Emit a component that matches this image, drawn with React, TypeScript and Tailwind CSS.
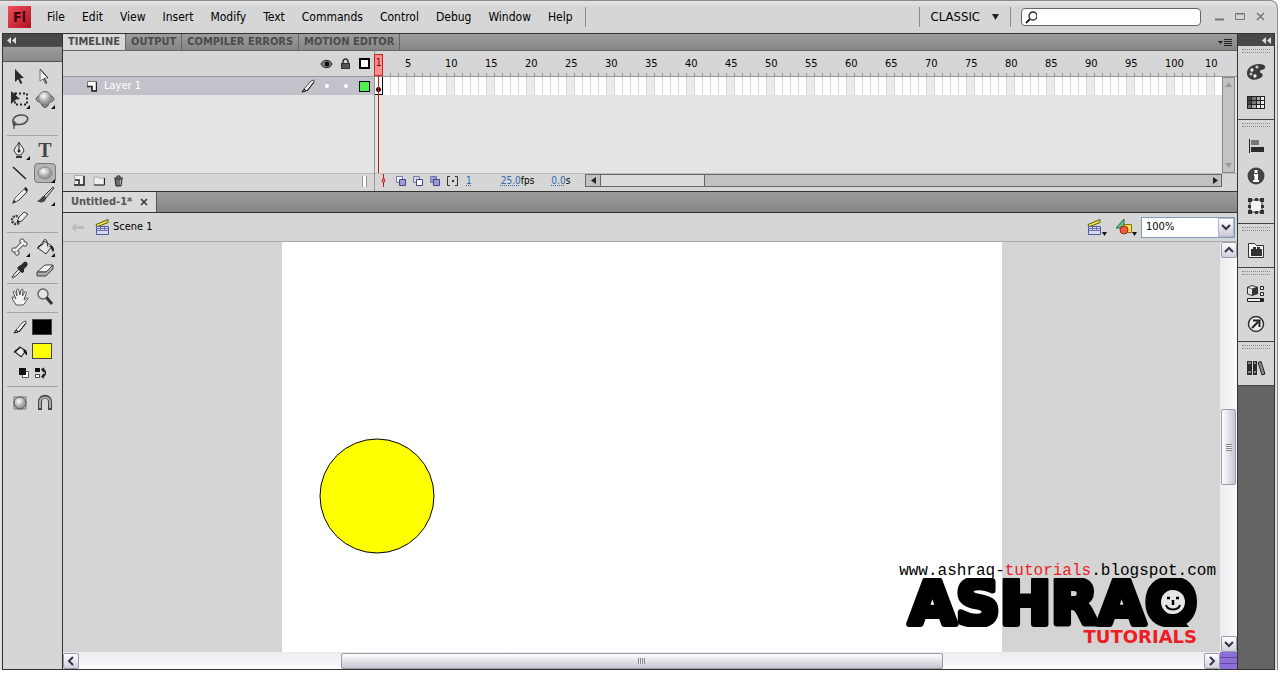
import type { ReactNode } from "react";

const menus = ["File", "Edit", "View", "Insert", "Modify", "Text", "Commands", "Control", "Debug", "Window", "Help"];
const panelTabs = ["TIMELINE", "OUTPUT", "COMPILER ERRORS", "MOTION EDITOR"];
const frames = Array.from({ length: 110 }, (_, i) => i + 1);
const rulerLabels = Array.from({ length: 21 }, (_, i) => (i + 1) * 5);

function Svg({ size = 20, children }: { size?: number; children: ReactNode }) {
  return (
    <svg width={size} height={size} viewBox={`0 0 ${size} ${size}`} fill="none" aria-hidden="true">
      {children}
    </svg>
  );
}

// little triangle that marks a tool with a fly-out
const Corner = () => <path d="M20 16v4h-4z" fill="#111" />;

const icons = {
  selection: (
    <Svg>
      <path d="M5 3l9 9-4 .3 2.4 4.7-2 1-2.2-4.8L5 16z" fill="#2b2b2b" />
    </Svg>
  ),
  subselection: (
    <Svg>
      <path d="M5 3l8 9-3.4.3 2.3 4.5-1.6.8-2.2-4.6L5 15z" fill="#f4f4f4" stroke="#777" />
      <path d="M9 12l2.5 5.5M5 3l8 9" stroke="#222" />
    </Svg>
  ),
  freeTransform: (
    <Svg>
      <path d="M5 4.500h12v11H5z" stroke="#222" strokeWidth="2" strokeDasharray="2 2" />
      <path d="M1 2l9 8-4 .5L1 15z" fill="#2b2b2b" />
      <Corner />
    </Svg>
  ),
  rotate3d: (
    <Svg>
      <ellipse cx="10" cy="10" rx="9" ry="4" fill="#aaa" stroke="#555" />
      <ellipse cx="10" cy="10.500" rx="4.500" ry="8" fill="#888" stroke="#555" />
      <circle cx="10" cy="9" r="6.500" fill="url(#ball)" stroke="#777" />
      <Corner />
    </Svg>
  ),
  lasso: (
    <Svg>
      <path d="M5 12C1 10 3 4 10 3c7-.6 9 3 7 6-2 3-8 4.500-12 3z" stroke="#4a4a4a" strokeWidth="1.500" />
      <path d="M5 9c-3 1-2 4 0 4s1-3-1-2c-2 2 1 3 0 6" stroke="#4a4a4a" strokeWidth="1.300" />
    </Svg>
  ),
  pen: (
    <Svg>
      <path d="M9 2c1 3 5 6 5 9l-3 4H7l-3-4c0-3 4-6 5-9z" fill="#e6e6e6" stroke="#333" />
      <path d="M9 3v7" stroke="#222" />
      <circle cx="9" cy="11" r="1.500" fill="#222" />
      <path d="M6 16h6v2H6z" fill="#333" />
      <Corner />
    </Svg>
  ),
  text: (
    <Svg>
      <text x="10" y="17" textAnchor="middle" fontSize="20" fontFamily="Liberation Serif" fontWeight="bold" fill="#444">T</text>
    </Svg>
  ),
  line: (
    <Svg>
      <path d="M3 4l13 12" stroke="#222" strokeWidth="1.500" />
    </Svg>
  ),
  oval: (
    <Svg>
      <ellipse cx="10" cy="10" rx="7" ry="6" fill="url(#ball)" stroke="#888" />
      <Corner />
    </Svg>
  ),
  pencil: (
    <Svg>
      <path d="M3 16l2-4 9-9 3 3-9 9z" fill="#e9e9e9" stroke="#666" />
      <path d="M2 18l2-4 2 2zM14 2l2-1 2 3-1 2z" fill="#222" />
      <path d="M8 15l9-9" stroke="#333" />
    </Svg>
  ),
  brush: (
    <Svg>
      <path d="M18 1l-9 9 2 2 8-10z" fill="#ccc" stroke="#333" />
      <path d="M9 10c-3 0-3 4-7 5 4 3 9 1 9-3z" fill="#444" />
      <Corner />
    </Svg>
  ),
  deco: (
    <Svg>
      <circle cx="6" cy="11" r="4" stroke="#444" strokeWidth="2.500" strokeDasharray="2 1" />
      <path d="M7 13l2-5 5-5 4 2-6 7z" fill="#e9e9e9" stroke="#444" />
      <path d="M7 14l1-3 2 2z" fill="#111" />
    </Svg>
  ),
  bone: (
    <Svg>
      <path d="M5 14L13 6" stroke="#444" strokeWidth="4.500" />
      <circle cx="4" cy="13" r="2.200" fill="#eee" stroke="#444" />
      <circle cx="7" cy="16" r="2.200" fill="#eee" stroke="#444" />
      <circle cx="12" cy="4" r="2.200" fill="#eee" stroke="#444" />
      <circle cx="15" cy="7" r="2.200" fill="#eee" stroke="#444" />
      <path d="M5 14L14 5" stroke="#eee" strokeWidth="2.500" />
      <Corner />
    </Svg>
  ),
  bucket: (
    <Svg>
      <path d="M9 4l8 5-6 8-8-6z" fill="#e8e8e8" stroke="#333" />
      <path d="M2 12c0-3 4-5 8-6-4 3-6 4-8 6zM17 9c3 2 2 5 1 6-2-2-1-4-4-6z" fill="#222" />
      <path d="M8 6c0-5 4-4 4-1l1 5" stroke="#333" />
      <Corner />
    </Svg>
  ),
  eyedropper: (
    <Svg>
      <path d="M2 18l2-4 6-6 2 2-6 6z" fill="#ddd" stroke="#444" />
      <path d="M9 6l2-1 3-3c2-1 5 1 3 4l-3 3v3l-2 1-5-5z" fill="#2b2b2b" />
    </Svg>
  ),
  eraser: (
    <Svg>
      <path d="M2 12l8-7h8l-7 7z" fill="#f2f2f2" stroke="#444" />
      <path d="M2 12h9l7-7v4l-7 7H2z" fill="#aaa" stroke="#444" />
    </Svg>
  ),
  hand: (
    <Svg>
      <path
        d="M6 18c-1-3-4-5-4-8 2-1 3 2 4 2L3 5c1-2 2 0 3 1l1 3-.5-6c1-2 2-1 2.200 0L10 8l1-5c1-1 2-1 2 0l-.5 6 2-4c2-1 2 1 1.500 2L14 13l3-2c2 0 1 1 0 2-2 2-2 4-4 5z"
        fill="#f1f1f1"
        stroke="#555"
      />
    </Svg>
  ),
  magnifier: (
    <Svg>
      <circle cx="8" cy="7" r="5" fill="#e5e5e5" stroke="#666" strokeWidth="1.500" />
      <path d="M11.500 10.500L17 17" stroke="#333" strokeWidth="3" />
    </Svg>
  ),
  snap: (
    <Svg>
      <path d="M5 17V9c0-7 10-7 10 0v8" stroke="#444" strokeWidth="4" />
      <path d="M5 15V9c0-6 10-6 10 0v6" stroke="#aaa" strokeWidth="2" />
    </Svg>
  ),
  objectDrawing: (
    <Svg>
      <path d="M4 4h12v12H4z" stroke="#777" />
      <circle cx="10" cy="10" r="6" fill="url(#ball)" stroke="#555" />
    </Svg>
  ),
  palette: (
    <Svg>
      <path d="M18 3C11 0 1 4 1 11c0 6 6 8 11 6 5-1 6-5 3-6-2-1-1-2 0-3 3 0 6-2 3-5z" fill="#3a3a3a" />
      <circle cx="6" cy="8" r="1.700" fill="#eee" />
      <circle cx="5" cy="12" r="1.600" fill="#bbb" />
      <circle cx="9" cy="14" r="1.700" fill="#eee" />
      <circle cx="11" cy="5" r="1.600" fill="#ccc" />
    </Svg>
  ),
  swatches: (
    <Svg>
      <path d="M1 4h18v13H1z" fill="#222" />
      <path d="M2 5h3v3H2zM2 9h3v3H2z" fill="#444" />
      <path d="M6 5h4v3H6zM6 9h4v3H6zM2 13h3v3H2z" fill="#777" />
      <path d="M11 5h3v3h-3zM11 9h3v3h-3zM6 13h4v3H6z" fill="#aaa" />
      <path d="M15 5h3v3h-3zM15 9h3v3h-3zM11 13h3v3h-3zM15 13h3v3h-3z" fill="#eee" />
    </Svg>
  ),
  align: (
    <Svg>
      <path d="M3.500 3v14" stroke="#222" />
      <path d="M5 4h8v5H5z" fill="#777" />
      <path d="M5 11h13v5H5z" fill="#2b2b2b" />
    </Svg>
  ),
  info: (
    <Svg>
      <circle cx="10" cy="10" r="8.500" fill="#444" />
      <path d="M8 8h4v6h1v2H7v-2h1.500v-4H8zM8.500 4h3v3h-3z" fill="#fff" />
    </Svg>
  ),
  transform: (
    <Svg>
      <path d="M4 4h12v12H4z" fill="#f4f4f4" stroke="#333" />
      <path d="M2 2h4v4H2zM14 2h4v4h-4zM2 14h4v4H2zM14 14h4v4h-4zM9 2h3v3H9zM9 15h3v3H9zM2 9h3v3H2zM15 9h3v3h-3z" fill="#333" />
    </Svg>
  ),
  library: (
    <Svg>
      <path d="M2.500 3.500h6l2 2h7v12h-15z" fill="#f5f5f5" stroke="#333" />
      <path d="M5 9h2V7h3v2h1V7h3v2h2v7H5z" fill="#333" />
    </Svg>
  ),
  components: (
    <Svg>
      <path d="M6 1l6 2v7l-6 2-5-2V3z" fill="#333" />
      <path d="M2 4l4 1v6L2 9.500zM6 2l4 1.200L6 4.500 2.500 3.200z" fill="#e5e5e5" />
      <path d="M14.500 2.500h3v3h-3zM14.500 8.500h3v3h-3zM1.500 14.500h16v3h-16z" fill="#eee" stroke="#222" />
      <path d="M14 14h3v3h-3z" fill="#222" />
    </Svg>
  ),
  inspector: (
    <Svg>
      <circle cx="10" cy="10" r="7.500" fill="#eee" stroke="#333" strokeWidth="1.500" />
      <path d="M6 14l6-6M7 6.500h6.500V13" stroke="#222" strokeWidth="2" />
    </Svg>
  ),
  books: (
    <Svg>
      <path d="M1 3h5v14H1zM7 3h4v14H7z" fill="#2b2b2b" />
      <path d="M2 5h3M8 5h2M2 14h3M8 14h2" stroke="#ddd" />
      <path d="M12 4.500l3-1 4 12.500-3 1z" fill="#888" stroke="#222" />
    </Svg>
  ),
};

type IconName = keyof typeof icons;

const toolGroups: { name: string; rows: (readonly [IconName, IconName?])[] }[] = [
  { name: "select", rows: [["selection", "subselection"], ["freeTransform", "rotate3d"], ["lasso"]] },
  { name: "draw", rows: [["pen", "text"], ["line", "oval"], ["pencil", "brush"], ["deco"]] },
  { name: "paint", rows: [["bone", "bucket"], ["eyedropper", "eraser"]] },
];

const dockGroups: IconName[][] = [
  ["palette", "swatches"],
  ["align", "info", "transform"],
  ["library"],
  ["components", "inspector"],
  ["books"],
];

function ToolButton({ name }: { name: IconName }) {
  return (
    <button
      aria-label={name}
      className={
        name === "oval"
          ? "flex h-5 w-[22px] items-center justify-center rounded-sm border border-[#777] bg-[#b4b4b4]"
          : "flex h-5 w-[22px] items-center justify-center"
      }
    >
      {icons[name]}
    </button>
  );
}

function ToolRow({ children }: { children: ReactNode }) {
  return <div className="grid h-[23px] grid-cols-2 place-items-center">{children}</div>;
}

function Toolbar() {
  return (
    <aside className="flex w-[61px] shrink-0 flex-col border-x border-[#333] bg-[#d6d6d6]">
      <button aria-label="Collapse tools" className="flex h-3 items-center bg-[#484848] pl-1">
        <Rewind />
      </button>
      <div className="h-4 border-y border-[#555] bg-linear-to-b from-[#9c9c9c] to-[#8a8a8a]" />
      {toolGroups.map((group) => (
        <div key={group.name} className="mx-1 border-b border-[#a3a3a3] py-[2px]">
          {group.rows.map(([a, b]) => (
            <ToolRow key={a}>
              <ToolButton name={a} />
              {b && <ToolButton name={b} />}
            </ToolRow>
          ))}
        </div>
      ))}
      <div className="mx-1 border-b border-[#a3a3a3] pb-1 pt-px">
        <ToolRow>
          <ToolButton name="hand" />
          <ToolButton name="magnifier" />
        </ToolRow>
      </div>
      <div className="mx-1 border-b border-[#a3a3a3] pb-[3px] pt-[2px]">
        <div className="flex h-6 items-center justify-between px-[6px]">
          <PencilMark />
          <button aria-label="Stroke color" className="h-4 w-5 border border-[#444] bg-black" />
        </div>
        <div className="flex h-6 items-center justify-between px-[6px]">
          <svg width="15" height="15" viewBox="0 0 20 20" aria-hidden="true">
            <path d="M9 4l8 5-6 8-8-6z" fill="#eee" stroke="#222" strokeWidth="1.500" />
            <path d="M1 12c0-3 4-6 9-7-4 4-7 5-9 7zM16 8c4 3 3 6 2 7-2-2-2-4-5-6z" fill="#111" />
          </svg>
          <button aria-label="Fill color" className="h-4 w-5 border border-[#444] bg-[#ffff00]" />
        </div>
        <div className="flex h-5 items-center justify-center gap-1">
          <svg width="12" height="12" aria-hidden="true">
            <path d="M4.500 4.500h6v6h-6z" fill="#fff" stroke="#555" />
            <path d="M1 1h7v7H1z" fill="#111" />
          </svg>
          <svg width="14" height="12" fill="none" aria-hidden="true">
            <path d="M1 1h5v4H1z" fill="#111" />
            <path d="M1.500 7.500h4v3h-4z" fill="#fff" stroke="#444" />
            <path d="M8 2.500c4-1 5 6 0 7M10 1L8 2.500 10 5M10 7L8 9.500l2 1.500" stroke="#222" strokeWidth="1.500" />
          </svg>
        </div>
      </div>
      <div className="px-1 pt-1">
        <ToolRow>
          <ToolButton name="objectDrawing" />
          <ToolButton name="snap" />
        </ToolRow>
      </div>
    </aside>
  );
}

function Rewind() {
  return (
    <svg width="9" height="7" aria-hidden="true">
      <path d="M4 0v7L0 3.500zM9 0v7L5 3.500z" fill="#ddd" />
    </svg>
  );
}

function PencilMark() {
  return (
    <svg width="14" height="14" fill="none" aria-hidden="true">
      <path d="M3 10l7-8 3-1v2l-7 9z" fill="#eee" stroke="#555" />
      <path d="M1 13l2-3 2 2zM6 12l7-9" stroke="#111" />
    </svg>
  );
}

function Clapper() {
  return (
    <svg width="15" height="17" aria-hidden="true">
      <path d="M1 5.500L13 .5v3L2 8z" fill="#e8e040" stroke="#5b5b10" />
      <path d="M1.500 7.500h12v8h-12z" fill="#d5d8f5" stroke="#55589a" />
      <path d="M2 9.500h11M2 11.500h11M5.500 8v4M9.500 8v4" stroke="#6b6fae" />
    </svg>
  );
}

function MenuBar() {
  return (
    <header className="flex h-[33px] shrink-0 items-center rounded-tr-lg border-r border-t border-[#8b8b8b] bg-linear-to-b from-[#e4e4e4] via-[#d6d6d6] via-20% to-[#d6d6d6] pl-2 pr-3">
      <div className="mr-4 flex h-[22px] w-[23px] items-center justify-center bg-linear-to-br from-[#f34a5c] to-[#b30d20] text-sm font-bold text-[#3a0208]">Fl</div>
      <nav className="flex gap-[17px]">
        {menus.map((menu) => (
          <button key={menu}>{menu}</button>
        ))}
      </nav>
      <div className="ml-3 h-5 w-px bg-[#8a8a8a]" />
      <div className="ml-auto flex items-center">
        <div className="h-5 w-px bg-[#8a8a8a]" />
        <button className="flex items-center gap-3 px-[11px] text-[13px]">
          CLASSIC
          <svg width="7" height="6" aria-hidden="true">
            <path d="M0 0h7L3.500 6z" fill="#222" />
          </svg>
        </button>
        <div className="h-5 w-px bg-[#8a8a8a]" />
        <label className="ml-[10px] flex h-[18px] w-[180px] items-center rounded-sm border border-[#666] bg-white px-[3px]">
          <svg width="13" height="13" fill="none" aria-hidden="true">
            <circle cx="8" cy="5" r="4" stroke="#222" strokeWidth="1.300" />
            <path d="M5 8l-4 4" stroke="#222" strokeWidth="2" />
          </svg>
          <input aria-label="Search" className="w-full min-w-0 outline-none" />
        </label>
        <div className="ml-[14px] flex items-center gap-[11px]">
          <button aria-label="Minimize">
            <svg width="9" height="10"><path d="M0 7.500h9" stroke="#777" strokeWidth="2" /></svg>
          </button>
          <button aria-label="Maximize">
            <svg width="10" height="10" fill="none"><path d="M.5 1.500h9v6h-9zM0 2h10" stroke="#777" /></svg>
          </button>
          <button aria-label="Close">
            <svg width="9" height="10"><path d="M1 1l7 7M8 1L1 8" stroke="#777" strokeWidth="1.500" /></svg>
          </button>
        </div>
      </div>
    </header>
  );
}

function LayerColumn() {
  return (
    <div className="flex w-[312px] shrink-0 flex-col border-r border-[#8d9a98]">
      <div className="flex h-[26px] items-center justify-end border-b border-[#999] bg-[#d6d6d6]">
        <div className="flex w-[19px] justify-center">
          <svg width="13" height="10" aria-hidden="true">
            <path d="M1 5c2-5 9-5 11 0-2 5-9 5-11 0z" fill="#888" stroke="#222" />
            <circle cx="7" cy="5" r="2.500" fill="#111" />
          </svg>
        </div>
        <div className="flex w-[19px] justify-center">
          <svg width="11" height="12" fill="none" aria-hidden="true">
            <path d="M3 6V4c0-4 5-4 5 0v2" stroke="#333" strokeWidth="1.500" />
            <path d="M1 5h9v6H1z" fill="#333" />
            <path d="M2 7h7M2 9h7" stroke="#777" />
          </svg>
        </div>
        <div className="flex w-[19px] justify-center">
          <div className="size-[11px] border-2 border-black bg-white" />
        </div>
      </div>
      <div className="flex h-[18px] items-center bg-[#c2c2ca] pl-6 text-[11px] text-white">
        <svg width="10" height="11" aria-hidden="true">
          <path d="M.5.5h9v9h-4v-4h-5z" fill="#fff" stroke="#777" />
          <path d="M0 5.500h5V10h4.500V1" fill="none" stroke="#222" strokeWidth="1.500" />
        </svg>
        <span className="ml-[7px] flex-1">Layer 1</span>
        <div className="flex w-[19px] justify-center"><PencilMark /></div>
        <div className="flex w-[19px] justify-center"><i className="size-1 rounded-full bg-white" /></div>
        <div className="flex w-[19px] justify-center"><i className="size-1 rounded-full bg-white" /></div>
        <div className="flex w-[19px] justify-center">
          <div className="size-[11px] border border-black bg-[#4ff04f]" />
        </div>
      </div>
      <div className="flex-1" />
      <div className="flex h-[18px] items-start gap-2 border-t border-[#bbb] bg-[#d6d6d6] pl-[11px] pr-[7px] pt-px">
        <button aria-label="New layer">
          <svg width="11" height="11"><path d="M.5.5h9v9h-9z" fill="#eee" stroke="#aaa" /><path d="M0 10h10V1M1 5h4v4" fill="none" stroke="#222" strokeWidth="1.500" /></svg>
        </button>
        <button aria-label="New folder">
          <svg width="12" height="11"><path d="M1 2h4l1 1h5v7H1z" fill="#eee" stroke="#aaa" /><path d="M1 10h10.500V3" fill="none" stroke="#222" /></svg>
        </button>
        <button aria-label="Delete layer">
          <svg width="11" height="12"><path d="M1 3h9M4 3V1h3v2M2 4l1 7h5l1-7zM4 4v7M6 4v7" fill="#bbb" stroke="#222" /></svg>
        </button>
        <div className="ml-auto mt-px h-[11px] w-[5px] border-x border-[#999] bg-white" />
      </div>
    </div>
  );
}

function FrameColumn() {
  return (
    <div className="relative flex min-w-0 flex-1 flex-col">
      <div className="flex h-[26px] flex-col border-b border-[#999] bg-[#d6d6d6]">
        <div className="mr-[18px] flex h-[22px] items-center overflow-hidden pl-[30px] pt-1 text-[11px]">
          {rulerLabels.map((n) => (
            <span key={n} className={n > 100 ? "shrink-0" : "w-10 shrink-0"}>{n > 100 ? String(n).slice(0, 2) : n}</span>
          ))}
        </div>
        <div className="mr-[15px] flex h-[3px] overflow-hidden">
          {frames.map((n) => (
            <i key={n} className="w-2 shrink-0 border-r border-[#8e8e8e]" />
          ))}
        </div>
      </div>
      <div className="flex min-h-0 flex-1 pr-[2px]">
        <div className="min-w-0 flex-1">
          <div className="flex h-[18px] overflow-hidden">
            {frames.map((n) => (
              <i
                key={n}
                className={n % 5 === 0 ? "w-2 shrink-0 border-r border-[#d8d8d8] bg-[#ebebeb]" : "w-2 shrink-0 border-r border-[#d8d8d8] bg-white"}
              />
            ))}
          </div>
        </div>
        <div className="flex w-[13px] flex-col items-center justify-between border border-[#888] bg-[#c3c3c3] py-1">
          <svg width="7" height="5"><path d="M0 5h7L3.500 0z" fill="#999" /></svg>
          <svg width="7" height="5"><path d="M0 0h7L3.500 5z" fill="#999" /></svg>
        </div>
      </div>
      <div className="flex h-[18px] items-start border-t border-[#bbb] bg-[#d6d6d6] pl-[5px] pr-[15px] text-[10px]">
        <svg width="7" height="13" aria-hidden="true"><path d="M3.500 0v13" stroke="#c11" /><path d="M3.500 4L5 6.500 3.500 9 2 6.500z" fill="#e88" stroke="#c11" /></svg>
        <div className="ml-[9px] flex gap-[6px] pt-[2px]">
          <OnionButton label="Onion skin" back="#fff" front="#9a9ad8" />
          <OnionButton label="Onion skin outlines" back="#d6d6d6" front="#fff" />
          <OnionButton label="Edit multiple frames" back="#9a9ad8" front="#9a9ad8" />
          <button aria-label="Modify markers">
            <svg width="11" height="11" fill="none"><path d="M3 .5H.5v9H3M8 .5h2.500v9H8" stroke="#333" /><path d="M5 4h2v2H5z" fill="#333" /></svg>
          </button>
        </div>
        <button className="ml-2 text-[#2b6cb0] underline decoration-dotted">1</button>
        <div className="ml-[29px]"><button className="text-[#2b6cb0] underline decoration-dotted">25.0</button>fps</div>
        <div className="ml-[17px] mr-[15px]"><button className="text-[#2b6cb0] underline decoration-dotted">0.0</button>s</div>
        <div className="flex h-[13px] flex-1 items-stretch justify-between border border-[#666] bg-[#c1c1c1]">
          <div className="flex">
            <button aria-label="Scroll frames left" className="flex w-[14px] items-center justify-center">
              <svg width="5" height="7"><path d="M5 0v7L0 3.500z" fill="#222" /></svg>
            </button>
            <div className="w-[105px] border-x border-[#666] bg-[#dcdcdc]" />
          </div>
          <button aria-label="Scroll frames right" className="flex w-3 items-center justify-center">
            <svg width="5" height="7"><path d="M0 0v7l5-3.500z" fill="#222" /></svg>
          </button>
        </div>
      </div>
      <div className="absolute left-0 top-[26px] flex h-[18px] w-2 items-end justify-center border-b border-r border-black pb-[2px]">
        <i className="size-[5px] rounded-full bg-[#300]" />
      </div>
      {/* playhead */}
      <div className="absolute bottom-[18px] left-0 top-[3px] flex w-[7px] flex-col items-center">
        <div className="h-[22px] w-[9px] shrink-0 border border-[#c22] bg-[#ff8f8f] pt-px text-center text-[10px] text-[#611]">1</div>
        <div className="w-px flex-1 bg-[#c11b1b]" />
      </div>
    </div>
  );
}

function OnionButton({ label, back, front }: { label: string; back: string; front: string }) {
  return (
    <button aria-label={label}>
      <svg width="11" height="11">
        <path d="M.5.5h6v6h-6z" fill={back} stroke="#7777b5" />
        <path d="M3.500 3.500h6v6h-6z" fill={front} stroke="#444488" />
      </svg>
    </button>
  );
}

function Timeline() {
  return (
    <section className="flex h-[158px] shrink-0 flex-col border-b border-[#333] bg-[#e4e4e4]">
      <div className="flex h-[17px] shrink-0 items-stretch border-b border-[#666] bg-linear-to-b from-[#9d9d9d] to-[#858585] pr-[5px] text-[11px] font-bold leading-4 text-[#4b4b4b]">
        {panelTabs.map((tab, i) => (
          <button
            key={tab}
            className={i === 0 ? "border-r border-[#666] bg-[#d9d9d9] px-[5px]" : "border-r border-[#666] px-[5px]"}
          >
            {tab}
          </button>
        ))}
        <button aria-label="Panel menu" className="ml-auto">
          <svg width="14" height="9"><path d="M0 3h5L2.500 6z" fill="#222" /><path d="M6 1.500h8M6 3.500h8M6 5.500h8M6 7.500h8" stroke="#222" /></svg>
        </button>
      </div>
      <div className="flex min-h-0 flex-1">
        <LayerColumn />
        <FrameColumn />
      </div>
    </section>
  );
}

function SceneBar() {
  return (
    <div className="flex h-[29px] shrink-0 items-center border-b border-[#aaa] bg-[#d6d6d6] pl-2 pr-[2px] text-[11px]">
      <button aria-label="Back">
        <svg width="13" height="9"><path d="M0 4.500L5 0v3h8v3H5v3z" fill="#bdbdbd" /></svg>
      </button>
      <div className="ml-[11px]"><Clapper /></div>
      <span className="ml-[3px]">Scene 1</span>
      <button aria-label="Edit scene" className="ml-auto flex items-end">
        <Clapper />
        <svg width="5" height="4"><path d="M0 0h5L2.500 4z" fill="#111" /></svg>
      </button>
      <button aria-label="Edit symbols" className="ml-2 flex items-end">
        <svg width="17" height="18">
          <path d="M1 10L9 1v9z" fill="#55c98a" stroke="#24714a" />
          <path d="M8.500 6.500h8v8h-8z" fill="#f5e642" stroke="#86701a" />
          <circle cx="9" cy="12" r="4" fill="#f25a3c" stroke="#9b2a1c" />
        </svg>
        <svg width="5" height="4"><path d="M0 0h5L2.500 4z" fill="#111" /></svg>
      </button>
      <label className="ml-1 flex h-[21px] w-[94px] items-center border border-[#7f9db9] bg-white">
        <select aria-label="Zoom" className="min-w-0 flex-1 appearance-none pl-1 outline-none" defaultValue="100%">
          <option>100%</option>
        </select>
        <span className="flex h-[19px] w-4 items-center justify-center border border-[#b5b5c8] bg-linear-to-b from-white to-[#c9c9da]">
          <Chevron dir="down" />
        </span>
      </label>
    </div>
  );
}

const chevrons = { up: "M1 7l4-4 4 4", down: "M1 3l4 4 4-4", left: "M7 1L3 5l4 4", right: "M3 1l4 4-4 4" };

function Chevron({ dir }: { dir: keyof typeof chevrons }) {
  return (
    <svg width="10" height="10" fill="none" aria-hidden="true">
      <path d={chevrons[dir]} stroke="#333344" strokeWidth="2" />
    </svg>
  );
}

function ScrollButton({ dir }: { dir: keyof typeof chevrons }) {
  return (
    <button
      aria-label={`Scroll ${dir}`}
      className="flex size-4 shrink-0 items-center justify-center rounded-xs border border-[#9a9aa8] bg-linear-to-b from-white to-[#cfcfdd]"
    >
      <Chevron dir={dir} />
    </button>
  );
}

function Watermark() {
  return (
    <div className="absolute bottom-[5px] right-1 flex flex-col items-end text-black">
      <p className="font-['Liberation_Mono'] text-base leading-[14px]">
        www.ashraq-<span className="text-[#ee1c25]">tutorials</span>.blogspot.com
      </p>
      {/* the box ends at the baseline, so the tail of the Q is cut flat */}
      <svg width="300" height="49" className="mr-4">
        <text
          x="297"
          y="46"
          textAnchor="end"
          fontFamily="DejaVu Sans"
          fontWeight="bold"
          fontSize="61"
          stroke="#000"
          strokeWidth="6"
          strokeLinejoin="round"
        >
          ASHRAQ
        </text>
        <circle cx="273" cy="24" r="12" fill="#e6e6e6" />
        <path d="M267 20h3M276 20h3M273 22v5" stroke="#000" strokeWidth="2.500" />
        <path d="M266 27c2 6 12 6 14 0" stroke="#000" strokeWidth="2" fill="none" />
      </svg>
      <p className="mr-[19px] font-['DejaVu_Sans'] text-lg font-bold leading-5 text-[#ee1c25]">TUTORIALS</p>
    </div>
  );
}

function Workspace() {
  return (
    <div className="flex min-h-0 flex-1">
      <div className="flex min-w-0 flex-1 flex-col">
        <main className="relative flex min-h-0 flex-1 justify-center overflow-hidden bg-[#d4d4d4]">
          <div className="relative w-[720px] bg-white">
            <svg width="116" height="116" className="absolute left-[37px] top-[196px]" aria-label="Yellow circle">
              <circle cx="58" cy="58" r="57" fill="#ffff00" stroke="#000" />
            </svg>
          </div>
          <Watermark />
        </main>
        <div className="flex h-[17px] shrink-0 items-center bg-linear-to-b from-[#ececf0] to-[#fbfbfd]">
          <ScrollButton dir="left" />
          <div className="flex h-4 flex-1 justify-center">
            <div className="flex w-[602px] items-center justify-center rounded-xs border border-[#9a9aa8] bg-linear-to-b from-white to-[#c6c6d3]">
              <i className="h-[6px] w-[7px] bg-[repeating-linear-gradient(90deg,#888_0_1px,#eee_1px_2px)]" />
            </div>
          </div>
          <ScrollButton dir="right" />
        </div>
      </div>
      <div className="flex w-[17px] shrink-0 flex-col items-center bg-linear-to-r from-[#ececf0] to-[#fbfbfd]">
        <ScrollButton dir="up" />
        <div className="grow" />
        <div className="flex h-[76px] w-[15px] items-center justify-center rounded-xs border border-[#9a9aa8] bg-linear-to-r from-white to-[#c6c6d3]">
          <i className="h-[7px] w-[6px] bg-[repeating-linear-gradient(#888_0_1px,#eee_1px_2px)]" />
        </div>
        <div className="grow" />
        <ScrollButton dir="down" />
        <div className="h-[17px] w-full shrink-0 bg-[repeating-linear-gradient(#8e6fd8_0_5px,#6845ad_5px_6px)]" />
      </div>
    </div>
  );
}

function Dock() {
  return (
    <aside className="flex w-[38px] shrink-0 flex-col border-x border-[#333] bg-[#646464]">
      <button aria-label="Expand panels" className="flex h-3 items-center justify-end bg-[#484848] pr-[3px]">
        <Rewind />
      </button>
      {dockGroups.map((group) => (
        <div key={group[0]} className="border-b border-[#444] bg-[#d6d6d6] pb-[2px] pt-[3px]">
          <div className="mx-auto mb-1 h-1 w-7 border-y border-dotted border-[#888]" />
          {group.map((name) => (
            <button key={name} aria-label={name} className="flex h-[30px] w-full items-center justify-center">
              {icons[name]}
            </button>
          ))}
        </div>
      ))}
    </aside>
  );
}

export default function App() {
  return (
    <div className="flex h-screen flex-col bg-white pb-[3px] pr-[2px] font-['DejaVu_Sans_Condensed','DejaVu_Sans',sans-serif] text-xs text-black">
      <svg width="0" height="0" className="absolute" aria-hidden="true">
        <radialGradient id="ball" cx="40%" cy="35%">
          <stop offset="0" stopColor="#fff" />
          <stop offset="1" stopColor="#9a9a9a" />
        </radialGradient>
      </svg>
      <MenuBar />
      <div className="flex min-h-0 flex-1 border-r border-[#8b8b8b] bg-[#e0e0e0] pl-[2px] pr-[2px]">
        <div className="flex min-w-0 flex-1 border-y border-[#333]">
          <Toolbar />
          <div className="flex min-w-0 flex-1 flex-col">
            <Timeline />
            <div className="flex h-[21px] shrink-0 border-b border-[#333] bg-linear-to-b from-[#9d9d9d] to-[#858585]">
              <div className="flex items-center gap-2 border-r border-[#555] bg-[#d9d9d9] px-2 text-[11px] font-bold text-[#555]">
                Untitled-1*
                <button aria-label="Close document">
                  <svg width="8" height="8"><path d="M1 1l6 6M7 1L1 7" stroke="#333" strokeWidth="1.500" /></svg>
                </button>
              </div>
            </div>
            <SceneBar />
            <Workspace />
          </div>
          <Dock />
        </div>
      </div>
    </div>
  );
}
